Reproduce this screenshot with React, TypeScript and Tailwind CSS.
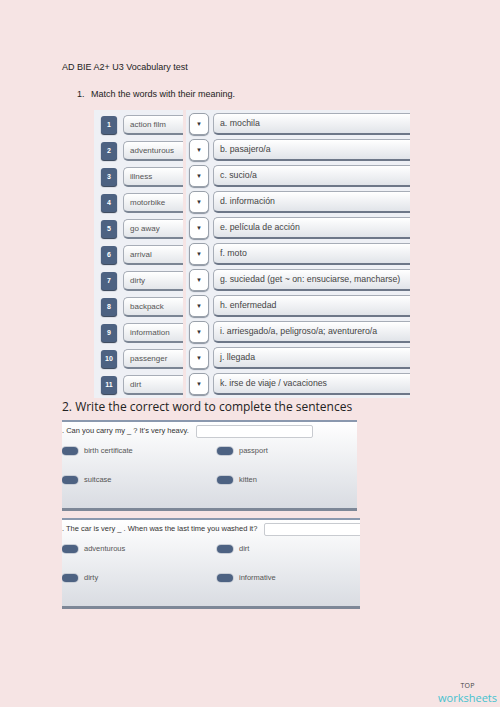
import React from "react";

const pairs: [string, string][] = [
  ["action film", "a. mochila"],
  ["adventurous", "b. pasajero/a"],
  ["illness", "c. sucio/a"],
  ["motorbike", "d. información"],
  ["go away", "e. película de acción"],
  ["arrival", "f. moto"],
  ["dirty", "g. suciedad (get ~ on: ensuciarse, mancharse)"],
  ["backpack", "h. enfermedad"],
  ["information", "i. arriesgado/a, peligroso/a; aventurero/a"],
  ["passenger", "j. llegada"],
  ["dirt", "k. irse de viaje / vacaciones"],
];

function Radio({ label }: { label: string }) {
  return (
    <div className="flex items-center gap-[6px] h-[12px]">
      <span className="block shrink-0 w-[16px] h-[8px] rounded-full bg-[#4d6282] shadow-[0_0_0_1px_#c9ced6]" />
      <span className="text-[7.5px] text-[#555]">{label}</span>
    </div>
  );
}

function Question({
  text,
  inputW,
  opts,
  width,
}: {
  text: string;
  inputW: string;
  opts: [string, string, string, string];
  width: string;
}) {
  return (
    <div
      className={`${width} h-[91px] border-t-2 border-t-[#8a98ae] border-b-[3px] border-b-[#7d8797] bg-gradient-to-b from-white to-[#d9dce2] flex flex-col overflow-hidden`}
    >
      <div className="flex items-center h-[18px] overflow-hidden">
        <span className="text-[7.5px] text-[#333] whitespace-nowrap">{text}</span>
        <span className={`block shrink-0 ${inputW} h-[13px] bg-white border border-[#c8cbd0] rounded-[2px] ml-[7px]`} />
      </div>
      <div className="grid grid-cols-[155px_1fr] mt-[5px] gap-y-[17px]">
        <Radio label={opts[0]} />
        <Radio label={opts[1]} />
        <Radio label={opts[2]} />
        <Radio label={opts[3]} />
      </div>
    </div>
  );
}

export default function App() {
  return (
    <div
      className="w-[500px] h-[707px] bg-[#f6e4e4] relative overflow-hidden"
      style={{ fontFamily: '"Liberation Sans", Arial, sans-serif' }}
    >
      <div className="pl-[62px] pt-[61px] text-[9px] text-[#222]">AD BIE A2+ U3 Vocabulary test</div>
      <div className="pl-[77px] pt-[13px] text-[9px] text-[#222] flex">
        <span className="w-[14px]">1.</span>
        <span>Match the words with their meaning.</span>
      </div>

      <div className="ml-[94px] mt-[9px] flex gap-[3px] h-[288px]">
        <div className="w-[89px] shrink-0 bg-[#eef0f5] overflow-hidden pt-[5px]">
          {pairs.map(([w], i) => (
            <div key={i} className="h-[26px] flex items-start">
              <span className="ml-[7px] mt-[1px] shrink-0 w-[16px] h-[18px] rounded-[3px] bg-[#4d6282] text-white text-[7px] font-bold flex items-center justify-center shadow-[0_1px_1px_#2d3b50]">
                {i + 1}
              </span>
              <span className="ml-[6px] w-[70px] shrink-0 h-[20px] rounded-l-[5px] border border-r-0 border-[#a7adb7] border-b-2 border-b-[#7b8594] bg-gradient-to-b from-white to-[#e3e6ea] text-[8px] text-[#555] pl-[6px] flex items-center whitespace-nowrap">
                {w}
              </span>
            </div>
          ))}
        </div>
        <div className="w-[224px] shrink-0 bg-[#eef0f5] overflow-hidden pt-[3px]">
          {pairs.map(([, m], i) => (
            <div key={i} className="h-[26px] flex items-start">
              <span className="ml-[3px] shrink-0 w-[20px] h-[22px] rounded-[5px] border border-[#9aa1ab] bg-white flex items-center justify-center shadow-[0_1px_1px_#8a93a0]">
                <span className="text-[6px] text-[#333]">▼</span>
              </span>
              <span className="ml-[4px] w-[200px] shrink-0 h-[22px] rounded-l-[5px] border border-r-0 border-[#a7adb7] border-b-2 border-b-[#6d7788] bg-gradient-to-b from-white to-[#e1e4e9] text-[8.75px] text-[#444] pl-[6px] flex items-center whitespace-nowrap">
                {m}
              </span>
            </div>
          ))}
        </div>
      </div>

      <div
        className="pl-[62px] text-[12px] leading-[18px] text-[#222] font-medium"
        style={{ fontFamily: '"Open Sans", sans-serif' }}
      >
        2. Write the correct word to complete the sentences
      </div>

      <div className="ml-[62px] mt-[4px]">
        <Question
          width="w-[295px]"
          text=". Can you carry my _ ? It's very heavy."
          inputW="w-[117px]"
          opts={["birth certificate", "passport", "suitcase", "kitten"]}
        />
      </div>
      <div className="ml-[62px] mt-[7px]">
        <Question
          width="w-[298px]"
          text=". The car is very _ . When was the last time you washed it?"
          inputW="w-[120px]"
          opts={["adventurous", "dirt", "dirty", "informative"]}
        />
      </div>

      <div
        className="absolute right-[3px] bottom-[3px] flex flex-col items-center"
        style={{ fontFamily: '"Open Sans", sans-serif' }}
      >
        <span className="text-[7px] leading-[10px] text-[#444] tracking-wide">TOP</span>
        <span className="text-[11px] leading-[13px] text-[#45c2cf]">worksheets</span>
      </div>
    </div>
  );
}
